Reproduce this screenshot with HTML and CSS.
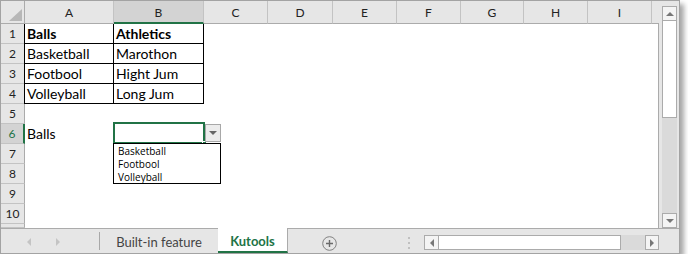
FILE: index.html
```html
<!DOCTYPE html>
<html lang="en">
<head>
    <meta charset="UTF-8">
    <meta name="viewport" content="width=device-width, initial-scale=1.0">
    <title>Drop-down list - Kutools</title>
    <link rel="stylesheet" href="styles.css">
</head>
<body>
    <div class="window">
        <div class="main">
            <div class="sheet">
                <div class="corner"><span class="select-all"></span></div>
                <div class="ch">A</div>
                <div class="ch active">B</div>
                <div class="ch">C</div>
                <div class="ch">D</div>
                <div class="ch">E</div>
                <div class="ch">F</div>
                <div class="ch">G</div>
                <div class="ch">H</div>
                <div class="ch">I</div>
                <div class="ch last"></div>
                <div class="edge"></div>

                <div class="rh">1</div>
                <div class="cell tbl first bold">Balls</div>
                <div class="cell tbl bold">Athletics</div>

                <div class="rh">2</div>
                <div class="cell tbl first">Basketball</div>
                <div class="cell tbl">Marothon</div>

                <div class="rh">3</div>
                <div class="cell tbl first">Footbool</div>
                <div class="cell tbl">Hight Jum</div>

                <div class="rh">4</div>
                <div class="cell tbl first">Volleyball</div>
                <div class="cell tbl">Long Jum</div>

                <div class="rh">5</div>

                <div class="rh active">6</div>
                <div class="cell">Balls</div>
                <div class="cell selected">
                    <span class="sel-border"><span class="handle"></span></span>
                    <span class="dd-btn"></span>
                    <ul class="dd-list">
                        <li>Basketball</li>
                        <li>Footbool</li>
                        <li>Volleyball</li>
                    </ul>
                </div>

                <div class="rh">7</div>
                <div class="rh">8</div>
                <div class="rh">9</div>
                <div class="rh">10</div>
                <div class="rh"></div>
            </div>

            <div class="vscroll">
                <div class="sb-btn up"></div>
                <div class="sb-thumb"></div>
                <div class="sb-track"></div>
                <div class="sb-btn down"></div>
            </div>
        </div>

        <div class="tabbar">
            <div class="nav">
                <span class="arr left"></span>
                <span class="arr right"></span>
            </div>
            <div class="sep"></div>
            <div class="tab">Built-in feature</div>
            <div class="tab current">Kutools</div>
            <div class="add">
                <svg width="15" height="15" viewBox="0 0 15 15">
                    <circle cx="7.5" cy="7.5" r="6.8" fill="none" stroke="#808080" stroke-width="1"/>
                    <path d="M7.5 4v7M4 7.5h7" stroke="#6a6a6a" stroke-width="1.4"/>
                </svg>
            </div>
            <div class="grip"><span></span><span></span><span></span></div>
            <div class="hscroll">
                <div class="sb-btn left"></div>
                <div class="sb-thumb"></div>
                <div class="sb-track"></div>
                <div class="sb-btn right"></div>
            </div>
        </div>
    </div>
</body>
</html>
```

FILE: styles.css
```css
* {
    box-sizing: border-box;
}
body {
    margin: 0;
    background: #fff;
    font-family: Lato, "Liberation Sans", sans-serif;
}
.window {
    width: 680px;
    height: 254px;
    border: 1px solid #a3a3a3;
    background: #e6e6e6;
    box-shadow: 4px 4px 5px rgba(0,0,0,0.35);
    display: flex;
    flex-direction: column;
}
.main {
    height: 227px;
    display: flex;
}

/* grid */
.sheet {
    width: 658px;
    display: grid;
    grid-template-columns: 24px 89px 90px 64px 65px 64px 64px 63px 64px 64px 7px;
    grid-template-rows: 23px repeat(10, 20px) 1fr;
    background: #fff;
}
.corner {
    background: #e6e6e6;
    border-right: 1px solid #ababab;
    border-bottom: 1px solid #ababab;
    display: flex;
    align-items: flex-end;
    justify-content: flex-end;
    padding: 0 2px 2px 0;
}
.select-all {
    width: 0;
    height: 0;
    border-left: 13px solid transparent;
    border-bottom: 12px solid #b7b7b7;
}
.ch {
    background: #e6e6e6;
    border-right: 1px solid #c3c3c3;
    border-bottom: 1px solid #ababab;
    font-size: 12px;
    color: #222;
    display: flex;
    align-items: center;
    justify-content: center;
    padding-top: 1px;
}
.ch.active {
    background: #d3d3d3;
    border-bottom: 2px solid #217346;
    padding-top: 2px;
}
.ch.last {
    border-right: none;
}
.edge {
    grid-column: 11;
    grid-row: 2 / -1;
    border-right: 1px solid #ababab;
}
.rh {
    grid-column: 1;
    background: #e6e6e6;
    border-right: 1px solid #ababab;
    border-bottom: 1px solid #c3c3c3;
    font-size: 12px;
    color: #222;
    display: flex;
    align-items: center;
    justify-content: center;
}
.rh.active {
    background: #d3d3d3;
    border-right: 2px solid #217346;
    color: #217346;
}
.cell {
    font-size: 14px;
    line-height: 19px;
    padding-left: 2px;
    color: #000;
    white-space: nowrap;
}
.bold {
    font-weight: bold;
}
.tbl {
    border-right: 1px solid #000;
    border-bottom: 1px solid #000;
}
.tbl.first {
    box-shadow: -1px 0 0 #000;
}

/* data validation list */
.selected {
    position: relative;
}
.sel-border {
    position: absolute;
    left: -1px;
    top: -2px;
    width: 92px;
    height: 22px;
    border: 2px solid #217346;
}
.handle {
    position: absolute;
    right: -4px;
    bottom: -4px;
    width: 5px;
    height: 5px;
    background: #217346;
    border: 1px solid #fff;
}
.dd-btn {
    position: absolute;
    left: 91px;
    top: 0;
    width: 16px;
    height: 18px;
    background: #ececec;
    border: 1px solid #a8a8a8;
    display: flex;
    align-items: center;
    justify-content: center;
}
.dd-btn::after {
    content: "";
    border-left: 4px solid transparent;
    border-right: 4px solid transparent;
    border-top: 4px solid #666;
}
.dd-list {
    position: absolute;
    left: -1px;
    top: 19px;
    width: 108px;
    height: 41px;
    margin: 0;
    padding: 1px 0 0 4px;
    list-style: none;
    background: #fff;
    border: 1px solid #000;
    font-family: "Open Sans", "Liberation Sans", sans-serif;
    font-size: 10px;
    line-height: 13px;
    color: #000;
    z-index: 2;
}

/* scroll bars */
.vscroll {
    width: 20px;
    padding: 5px 2px 0 3px;
    display: flex;
    flex-direction: column;
}
.sb-btn {
    width: 15px;
    height: 15px;
    background: #f4f4f4;
    border: 1px solid #ababab;
    display: flex;
    align-items: center;
    justify-content: center;
}
.sb-btn::after {
    content: "";
    width: 0;
    height: 0;
}
.sb-btn.up::after {
    border-left: 4px solid transparent;
    border-right: 4px solid transparent;
    border-bottom: 4px solid #777;
}
.sb-btn.down::after {
    border-left: 4px solid transparent;
    border-right: 4px solid transparent;
    border-top: 4px solid #777;
}
.sb-btn.left::after {
    border-top: 4px solid transparent;
    border-bottom: 4px solid transparent;
    border-right: 4px solid #777;
}
.sb-btn.right::after {
    border-top: 4px solid transparent;
    border-bottom: 4px solid transparent;
    border-left: 4px solid #777;
}
.vscroll .sb-thumb {
    height: 97px;
    background: #fff;
    border: 1px solid #ababab;
    border-top: none;
}
.vscroll .sb-track {
    flex: 1;
    background: #dadada;
}

/* sheet tabs */
.tabbar {
    flex: 1;
    border-top: 1px solid #ababab;
    display: flex;
    align-items: flex-start;
}
.nav {
    width: 98px;
    height: 100%;
    display: flex;
    align-items: center;
    padding: 2px 0 0 26px;
    gap: 25px;
}
.arr {
    width: 0;
    height: 0;
    border-top: 4px solid transparent;
    border-bottom: 4px solid transparent;
}
.arr.left {
    border-right: 4px solid #c4c4c4;
}
.arr.right {
    border-left: 4px solid #c4c4c4;
}
.sep {
    width: 1px;
    height: 18px;
    margin-top: 3px;
    background: #a8a8a8;
}
.tab {
    height: 100%;
    width: 118px;
    display: flex;
    align-items: center;
    justify-content: center;
    padding-top: 1px;
    font-size: 13px;
    color: #444;
}
.tab.current {
    width: 70px;
    height: calc(100% + 1px);
    margin-top: -1px;
    background: #fff;
    border-right: 1px solid #ababab;
    border-bottom: 2px solid #217346;
    color: #217346;
    font-weight: bold;
    padding-top: 2px;
}
.add {
    margin: 6px 0 0 34px;
    height: 15px;
}
.grip {
    margin: 8px 0 0 71px;
    display: flex;
    flex-direction: column;
    gap: 3px;
}
.grip span {
    width: 2px;
    height: 2px;
    background: #c0c0c0;
}
.hscroll {
    margin: 6px 0 0 14px;
    display: flex;
}
.hscroll .sb-thumb {
    width: 182px;
    height: 15px;
    background: #fff;
    border: 1px solid #ababab;
    border-left: none;
}
.hscroll .sb-track {
    width: 24px;
    height: 15px;
    background: #dadada;
}
.hscroll .sb-btn.right {
    width: 14px;
}
```
